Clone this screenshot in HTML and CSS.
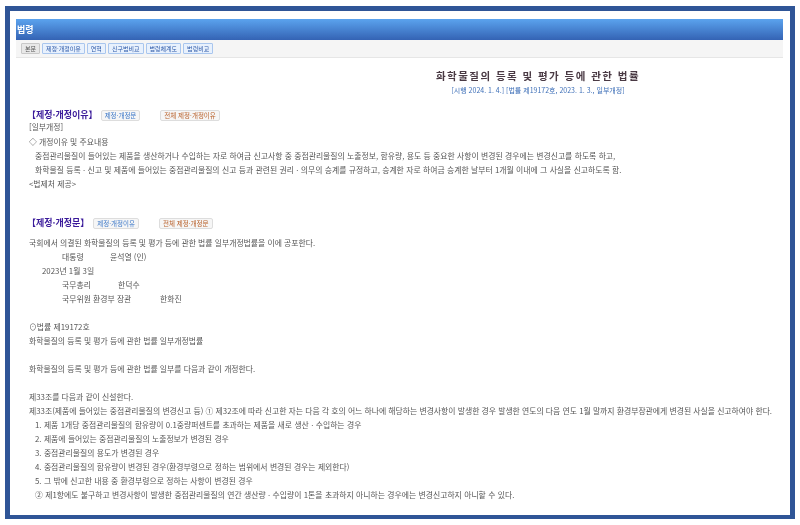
FILE: index.html
```html
<!DOCTYPE html>
<html lang="ko">
<head>
<meta charset="utf-8">
<title>법령</title>
<link rel="stylesheet" href="styles.css">
</head>
<body>
<div class="frame">
  <header class="bar">법령</header>
  <nav class="tools">
    <a class="tab tab-on">본문</a>
    <a class="tab">제정·개정이유</a>
    <a class="tab">연혁</a>
    <a class="tab">신구법비교</a>
    <a class="tab">법령체계도</a>
    <a class="tab">법령비교</a>
  </nav>
  <main class="doc">
    <div class="head">
      <h1 class="title">화학물질의 등록 및 평가 등에 관한 법률</h1>
      <p class="meta">[시행 2024. 1. 4.] [법률 제19172호, 2023. 1. 3., 일부개정]</p>
    </div>
    <section class="sec sec-a">
      <div class="sec-head">
        <h2>【제정·개정이유】</h2>
        <a class="btn btn-blue">제정·개정문</a>
        <a class="btn btn-org">전체 제정·개정이유</a>
      </div>
      <p class="tight">[일부개정]</p>
      <p class="nudge">◇ 개정이유 및 주요내용</p>
      <p class="in1">중점관리물질이 들어있는 제품을 생산하거나 수입하는 자로 하여금 신고사항 중 중점관리물질의 노출정보, 함유량, 용도 등 중요한 사항이 변경된 경우에는 변경신고를 하도록 하고,</p>
      <p class="in1">화학물질 등록 · 신고 및 제품에 들어있는 중점관리물질의 신고 등과 관련된 권리 · 의무의 승계를 규정하고, 승계한 자로 하여금 승계한 날부터 1개월 이내에 그 사실을 신고하도록 함.</p>
      <p>&lt;법제처 제공&gt;</p>
    </section>
    <section class="sec sec-b">
      <div class="sec-head">
        <h2>【제정·개정문】</h2>
        <a class="btn btn-blue">제정·개정이유</a>
        <a class="btn btn-org">전체 제정·개정문</a>
      </div>
      <p class="gap-s">국회에서 의결된 화학물질의 등록 및 평가 등에 관한 법률 일부개정법률을 이에 공포한다.</p>
      <p class="in3 cols"><span class="c1">대통령</span><span>윤석열 (인)</span></p>
      <p class="in2">2023년 1월 3일</p>
      <p class="in3 cols"><span class="c2">국무총리</span><span>한덕수</span></p>
      <p class="in3 cols"><span class="c3">국무위원 환경부 장관</span><span>한화진</span></p>
      <p class="blank">⊙법률 제19172호</p>
      <p>화학물질의 등록 및 평가 등에 관한 법률 일부개정법률</p>
      <p class="blank">화학물질의 등록 및 평가 등에 관한 법률 일부를 다음과 같이 개정한다.</p>
      <p class="blank">제33조를 다음과 같이 신설한다.</p>
      <p>제33조(제품에 들어있는 중점관리물질의 변경신고 등) ① 제32조에 따라 신고한 자는 다음 각 호의 어느 하나에 해당하는 변경사항이 발생한 경우 발생한 연도의 다음 연도 1월 말까지 환경부장관에게 변경된 사실을 신고하여야 한다.</p>
      <p class="in1">1. 제품 1개당 중점관리물질의 함유량이 0.1중량퍼센트를 초과하는 제품을 새로 생산 · 수입하는 경우</p>
      <p class="in1">2. 제품에 들어있는 중점관리물질의 노출정보가 변경된 경우</p>
      <p class="in1">3. 중점관리물질의 용도가 변경된 경우</p>
      <p class="in1">4. 중점관리물질의 함유량이 변경된 경우(환경부령으로 정하는 범위에서 변경된 경우는 제외한다)</p>
      <p class="in1">5. 그 밖에 신고한 내용 중 환경부령으로 정하는 사항이 변경된 경우</p>
      <p class="in1">② 제1항에도 불구하고 변경사항이 발생한 중점관리물질의 연간 생산량 · 수입량이 1톤을 초과하지 아니하는 경우에는 변경신고하지 아니할 수 있다.</p>
    </section>
  </main>
</div>
</body>
</html>
```
FILE: styles.css
```css
* { box-sizing: border-box; }
html, body { margin: 0; height: 525px; background: #fff; overflow: hidden; }
body {
  padding: 6px 5px;
  font-family: "Noto Sans CJK KR", "Liberation Sans", sans-serif;
  font-size: 7.85px;
  color: #555;
}
.frame {
  height: 513px;
  border: 5px solid #2f5597;
  border-bottom-width: 4px;
  padding: 8px 7px 0 6px;
  overflow: hidden;
  filter: blur(.35px);
}
.bar {
  height: 21px;
  line-height: 21px;
  padding-left: 1px;
  color: #fff;
  font-weight: 700;
  font-size: 9px;
  background: linear-gradient(#5ba3ee, #3463b4);
}
.tools {
  height: 18px;
  display: flex;
  gap: 2px;
  align-items: center;
  padding-left: 5px;
  background: #f5f5f5;
  border-bottom: 1px solid #e6e6e6;
}
.tab {
  height: 11px;
  line-height: 9px;
  padding: 0 3px;
  font-size: 6px;
  color: #2b58a8;
  background: #e8f1fd;
  border: 1px solid #a9c6ee;
  border-radius: 1px;
}
.tab-on { color: #555; background: #e8e8e8; border-color: #c8c8c8; }
.doc { padding: 0 0 0 13px; }
.head { padding: 11px 0 0 0; margin-left: 389px; width: 240px; text-align: center; }
.title { margin: 0; font-size: 10.5px; line-height: 14px; font-weight: 700; letter-spacing: 1.45px; color: #4a3a44; }
.meta { margin: 3px 0 0; font-size: 7px; line-height: 9px; color: #3f70b8; }
.sec-head { display: flex; align-items: center; height: 14px; }
.sec-head h2 { margin: 0 0 0 -2px; font-size: 9px; line-height: 14px; font-weight: 700; color: #3a1a9a; }
.btn {
  height: 11px;
  line-height: 9px;
  padding: 0 3px;
  font-size: 6.5px;
  border: 1px solid #ddd;
  border-radius: 2px;
  background: #f6f6f6;
}
.btn-blue { color: #3c78c8; }
.btn-org { color: #b8602a; }
.sec-a { margin-top: 13px; }
.sec-a .btn-blue { margin-left: 3px; }
.sec-a .btn-org { margin-left: 20px; }
.sec-b { margin-top: 25px; }
.sec-b .btn-blue { margin-left: 4px; }
.sec-b .btn-org { margin-left: 20px; }
p { margin: 0; line-height: 14px; white-space: nowrap; }
.tight { margin-top: -2px; }
.nudge { margin-top: 1px; }
.gap-s { margin-top: 6px; }
.blank { margin-top: 14px; }
.in1 { padding-left: 6px; word-spacing: .15px; }
.in2 { padding-left: 13px; }
.in3 { padding-left: 33px; }
.cols { display: flex; }
.c1 { width: 48px; }
.c2 { width: 56px; }
.c3 { width: 98px; }
```
